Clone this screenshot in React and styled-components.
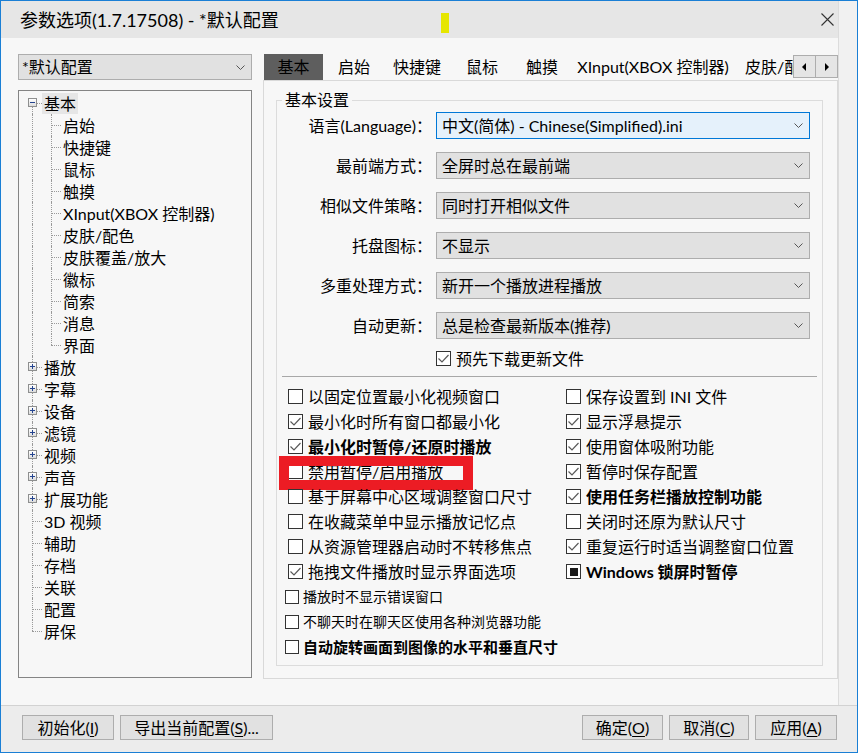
import React from "react";
import styled, { createGlobalStyle } from "styled-components";

const GlobalStyle = createGlobalStyle`
  html, body {
    margin: 0;
    padding: 0;
    background: #ffffff;
  }
  body {
    font-family: "Lato", "Noto Sans CJK SC", sans-serif;
    font-size: 16px;
    color: #000;
  }
  * {
    box-sizing: border-box;
  }
`;

const Window = styled.div`
  width: 858px;
  height: 753px;
  border: 1px solid #1a7fd5;
  display: flex;
  flex-direction: column;
  background: #f7f7f7;
  overflow: hidden;
`;

const Upper = styled.div`
  display: flex;
  height: 704px;
`;

const Main = styled.div`
  width: 837px;
  display: flex;
  flex-direction: column;
`;

const Gutter = styled.div`
  flex: 1;
  background: #f1f1f1;
  border-left: 1px solid #dcdcdc;
`;

const TitleBar = styled.div`
  position: relative;
  height: 37px;
  display: flex;
  align-items: center;
  background: #e6e6e6;
  padding-left: 19px;
`;

const Title = styled.div`
  font-size: 18px;
  line-height: 24px;
  color: #000;
`;

const Marker = styled.span`
  position: absolute;
  left: 440px;
  top: 12px;
  width: 8px;
  height: 20px;
  background: #e6e600;
`;

const CloseButton = styled.div`
  margin-left: auto;
  width: 22px;
  height: 37px;
  display: flex;
  align-items: center;
  justify-content: center;
`;

const Body = styled.div`
  flex: 1;
  display: flex;
  padding: 16px 0 0 17px;
`;

const LeftCol = styled.div`
  width: 234px;
  display: flex;
  flex-direction: column;
  gap: 10px;
`;

const Combo = styled.div`
  display: flex;
  align-items: center;
  height: ${(p) => p.$h || 27}px;
  border: 1px solid ${(p) => (p.$focus ? "#0078d7" : "#adadad")};
  background: ${(p) => (p.$focus ? "#e5f1fb" : "#e1e1e1")};
  padding: 0 6px 0 ${(p) => p.$pad || 5}px;
  white-space: nowrap;
  line-height: 22px;
`;

const ComboText = styled.span`
  flex: 1;
  overflow: hidden;
`;

const Tree = styled.div`
  height: 588px;
  border: 1px solid #848484;
  padding-top: 1px;
  background: #f7f7f7;
`;

const TreeLine = styled.div`
  display: flex;
  height: 22px;
  align-items: center;
`;

const Guide = styled.span`
  position: relative;
  flex: none;
  width: ${(p) => p.$w}px;
  height: 22px;
  &::before {
    content: "";
    position: absolute;
    left: ${(p) => p.$x}px;
    top: ${(p) => (p.$v === "bottom" ? 11 : 0)}px;
    height: ${(p) => (p.$v === "full" ? 22 : 11)}px;
    border-left: 1px dotted #9a9a9a;
  }
  &::after {
    content: "";
    display: ${(p) => (p.$h ? "block" : "none")};
    position: absolute;
    left: ${(p) => p.$x}px;
    right: 0;
    top: 11px;
    border-top: 1px dotted #9a9a9a;
  }
`;

const ExpanderBox = styled.span`
  position: absolute;
  z-index: 1;
  left: 9px;
  top: 6px;
  width: 9px;
  height: 9px;
  border: 1px solid #8e8f8f;
  background: linear-gradient(#ffffff, #dcdcdc);
  display: flex;
`;

const NodeLabel = styled.span`
  padding: 0 2px;
  line-height: 21px;
  background: ${(p) => (p.$selected ? "#e6e6e6" : "transparent")};
  white-space: nowrap;
`;

const RightCol = styled.div`
  margin-left: 11px;
  width: 575px;
  display: flex;
  flex-direction: column;
`;

const TabStrip = styled.div`
  display: flex;
  height: 26px;
  padding-left: 1px;
`;

const TabTrack = styled.div`
  flex: 1;
  display: flex;
  overflow: hidden;
`;

const Tab = styled.div`
  flex: none;
  width: ${(p) => (p.$w ? `${p.$w}px` : "auto")};
  padding-left: ${(p) => p.$pl || 0}px;
  display: flex;
  align-items: center;
  justify-content: ${(p) => (p.$pl ? "flex-start" : "center")};
  background: ${(p) => (p.$active ? "#5e5e5e" : "transparent")};
  white-space: nowrap;
  line-height: 22px;
`;

const ScrollPair = styled.div`
  display: flex;
  margin-top: 1px;
  height: 23px;
`;

const ScrollButton = styled.div`
  width: 23px;
  height: 23px;
  border: 1px solid #adadad;
  background: #e5e5e5;
  display: flex;
  align-items: center;
  justify-content: center;
  & + & {
    margin-left: -1px;
  }
`;

const Panel = styled.div`
  height: 599px;
  border: 1px solid #d9d9d9;
  display: flex;
  flex-direction: column;
  background: #f7f7f7;
`;

const GroupBox = styled.fieldset`
  flex: 1;
  min-width: 0;
  margin: 8px 14px 12px 12px;
  padding: 0;
  border: 1px solid #dcdcdc;
`;

const Legend = styled.legend`
  margin-left: 5px;
  padding: 0 3px;
  line-height: 22px;
`;

const FormGrid = styled.div`
  display: grid;
  grid-template-columns: 155px 374px;
  column-gap: 4px;
  row-gap: 13px;
  padding-top: 1px;
  align-items: center;
`;

const FieldLabel = styled.div`
  text-align: right;
  white-space: nowrap;
  line-height: 22px;
`;

const Separator = styled.div`
  height: 1px;
  margin: 10px 5px 0;
  background: #a8a8a8;
`;

const CheckGrid = styled.div`
  display: grid;
  grid-template-columns: 278px 1fr;
  grid-auto-rows: 25px;
  margin-top: 7px;
  padding-left: 11px;
`;

const LegacyList = styled.div`
  display: flex;
  flex-direction: column;
  padding-left: 8px;
`;

const CheckRow = styled.div`
  position: relative;
  display: flex;
  align-items: center;
  height: ${(p) => (p.$compact ? 15 : 25)}px;
  margin-top: ${(p) => (p.$compact ? -1 : 0)}px;
  white-space: nowrap;
`;

const Box = styled.span`
  flex: none;
  width: ${(p) => (p.$legacy ? 14 : 15)}px;
  height: ${(p) => (p.$legacy ? 14 : 15)}px;
  border: 1px solid #333333;
  background: #ffffff;
  display: flex;
  align-items: center;
  justify-content: center;
`;

const Fill = styled.span`
  width: 8px;
  height: 8px;
  background: #1a1a1a;
`;

const CheckText = styled.span`
  margin-left: ${(p) => (p.$legacy ? 4 : 5)}px;
  font-size: ${(p) => (p.$legacy ? (p.$bold ? 15 : 14) : 16)}px;
  font-weight: ${(p) => (p.$bold ? 700 : 400)};
  line-height: 22px;
`;

const Callout = styled.span`
  position: absolute;
  left: -9px;
  top: -3px;
  width: 194px;
  height: 34px;
  border: 10px solid #ec1c24;
  pointer-events: none;
`;

const Footer = styled.div`
  height: 47px;
  border-top: 1px solid #d2d2d2;
  background: #ececec;
  display: flex;
  align-items: flex-start;
  padding: 9px 20px 0 21px;
`;

const ButtonGroup = styled.div`
  display: flex;
  gap: 6px;
  margin-left: ${(p) => (p.$right ? "auto" : "0")};
`;

const Button = styled.div`
  width: ${(p) => p.$w}px;
  height: 25px;
  border: 1px solid #adadad;
  background: #e1e1e1;
  display: flex;
  align-items: center;
  justify-content: center;
  line-height: 20px;
  white-space: nowrap;
`;

const Underlined = styled.u`
  text-underline-offset: 2px;
`;

const Chevron = () => (
  <svg width="9" height="5" viewBox="0 0 9 5">
    <polyline points="0.5,0.5 4.5,4.5 8.5,0.5" fill="none" stroke="#555" strokeWidth="1" />
  </svg>
);

const Expander = ({ plus }) => (
  <ExpanderBox>
    <svg width="7" height="7" viewBox="0 0 7 7">
      <path d="M1 3.5h5" stroke="#24448f" strokeWidth="1" />
      {plus && <path d="M3.5 1v5" stroke="#24448f" strokeWidth="1" />}
    </svg>
  </ExpanderBox>
);

const subItems = ["启始", "快捷键", "鼠标", "触摸", "XInput(XBOX 控制器)", "皮肤/配色", "皮肤覆盖/放大", "徽标", "简索", "消息", "界面"];
const branches = ["播放", "字幕", "设备", "滤镜", "视频", "声音", "扩展功能"];
const leaves = ["3D 视频", "辅助", "存档", "关联", "配置", "屏保"];

const treeItems = [
  { text: "基本", box: "minus", first: true, selected: true },
  ...subItems.map((text, i) => ({ text, sub: true, lastSub: i === subItems.length - 1 })),
  ...branches.map((text) => ({ text, box: "plus" })),
  ...leaves.map((text, i) => ({ text, last: i === leaves.length - 1 })),
];

const TreeRow = ({ item }) => {
  const v0 = item.first ? "bottom" : item.last ? "top" : "full";
  return (
    <TreeLine>
      <Guide $w={23} $x={13} $v={v0} $h={!item.sub}>
        {item.box && <Expander plus={item.box === "plus"} />}
      </Guide>
      {item.sub && <Guide $w={19} $x={9} $v={item.lastSub ? "top" : "full"} $h />}
      <NodeLabel $selected={item.selected}>{item.text}</NodeLabel>
    </TreeLine>
  );
};

const tabs = [
  { text: "基本", w: 59, active: true },
  { text: "启始", w: 62 },
  { text: "快捷键", w: 64 },
  { text: "鼠标", w: 66 },
  { text: "触摸", w: 54 },
  { text: "XInput(XBOX 控制器)", w: 168 },
  { text: "皮肤/配色", pl: 8 },
];

const fields = [
  { label: "语言(Language)：", value: "中文(简体) - Chinese(Simplified).ini", focus: true },
  { label: "最前端方式：", value: "全屏时总在最前端" },
  { label: "相似文件策略：", value: "同时打开相似文件" },
  { label: "托盘图标：", value: "不显示" },
  { label: "多重处理方式：", value: "新开一个播放进程播放" },
  { label: "自动更新：", value: "总是检查最新版本(推荐)" },
];

const leftChecks = [
  { text: "以固定位置最小化视频窗口" },
  { text: "最小化时所有窗口都最小化", state: "on" },
  { text: "最小化时暂停/还原时播放", state: "on", bold: true },
  { text: "禁用暂停/启用播放", marked: true },
  { text: "基于屏幕中心区域调整窗口尺寸" },
  { text: "在收藏菜单中显示播放记忆点" },
  { text: "从资源管理器启动时不转移焦点" },
  { text: "拖拽文件播放时显示界面选项", state: "on" },
];

const rightChecks = [
  { text: "保存设置到 INI 文件" },
  { text: "显示浮悬提示", state: "on" },
  { text: "使用窗体吸附功能", state: "on" },
  { text: "暂停时保存配置", state: "on" },
  { text: "使用任务栏播放控制功能", state: "on", bold: true },
  { text: "关闭时还原为默认尺寸" },
  { text: "重复运行时适当调整窗口位置", state: "on" },
  { text: "Windows 锁屏时暂停", state: "mixed", bold: true },
];

const legacyChecks = [
  { text: "播放时不显示错误窗口" },
  { text: "不聊天时在聊天区使用各种浏览器功能" },
  { text: "自动旋转画面到图像的水平和垂直尺寸", bold: true },
];

const Check = ({ item, legacy, compact }) => (
  <CheckRow $compact={compact}>
    <Box $legacy={legacy}>
      {item.state === "on" && (
        <svg width="13" height="13" viewBox="0 0 13 13">
          <polyline points="1.5,6.5 5,10 11.5,3" fill="none" stroke="#5a5a5a" strokeWidth="1.2" />
        </svg>
      )}
      {item.state === "mixed" && <Fill />}
    </Box>
    <CheckText $bold={item.bold} $legacy={legacy}>{item.text}</CheckText>
    {item.marked && <Callout />}
  </CheckRow>
);

export default function App() {
  const checkCells = [];
  leftChecks.forEach((item, i) => {
    checkCells.push(<Check key={`l${i}`} item={item} />);
    checkCells.push(<Check key={`r${i}`} item={rightChecks[i]} />);
  });

  return (
    <>
      <GlobalStyle />
      <Window>
        <Upper>
          <Main>
            <TitleBar>
              <Title>参数选项(1.7.17508) - *默认配置</Title>
              <Marker />
              <CloseButton>
                <svg width="13" height="13" viewBox="0 0 13 13">
                  <path d="M0.5 0.5L12.5 12.5M12.5 0.5L0.5 12.5" stroke="#333" strokeWidth="1.1" />
                </svg>
              </CloseButton>
            </TitleBar>
            <Body>
              <LeftCol>
                <Combo $h={26} $pad={3}>
                  <ComboText>*默认配置</ComboText>
                  <Chevron />
                </Combo>
                <Tree>
                  {treeItems.map((item) => (
                    <TreeRow key={item.text} item={item} />
                  ))}
                </Tree>
              </LeftCol>
              <RightCol>
                <TabStrip>
                  <TabTrack>
                    {tabs.map((t) => (
                      <Tab key={t.text} $w={t.w} $pl={t.pl} $active={t.active}>
                        {t.text}
                      </Tab>
                    ))}
                  </TabTrack>
                  <ScrollPair>
                    <ScrollButton>
                      <svg width="5" height="8" viewBox="0 0 5 8">
                        <polygon points="4,0 4,8 0,4" fill="#000" />
                      </svg>
                    </ScrollButton>
                    <ScrollButton>
                      <svg width="5" height="8" viewBox="0 0 5 8">
                        <polygon points="1,0 1,8 5,4" fill="#000" />
                      </svg>
                    </ScrollButton>
                  </ScrollPair>
                </TabStrip>
                <Panel>
                  <GroupBox>
                    <Legend>基本设置</Legend>
                    <FormGrid>
                      {fields.map((f) => (
                        <React.Fragment key={f.label}>
                          <FieldLabel>{f.label}</FieldLabel>
                          <Combo $focus={f.focus}>
                            <ComboText>{f.value}</ComboText>
                            <Chevron />
                          </Combo>
                        </React.Fragment>
                      ))}
                      <span />
                      <Check compact item={{ text: "预先下载更新文件", state: "on" }} />
                    </FormGrid>
                    <Separator />
                    <CheckGrid>{checkCells}</CheckGrid>
                    <LegacyList>
                      {legacyChecks.map((item) => (
                        <Check key={item.text} item={item} legacy />
                      ))}
                    </LegacyList>
                  </GroupBox>
                </Panel>
              </RightCol>
            </Body>
          </Main>
          <Gutter />
        </Upper>
        <Footer>
          <ButtonGroup>
            <Button $w={92}>初始化(<Underlined>I</Underlined>)</Button>
            <Button $w={153}>导出当前配置(<Underlined>S</Underlined>)...</Button>
          </ButtonGroup>
          <ButtonGroup $right>
            <Button $w={81}>确定(<Underlined>O</Underlined>)</Button>
            <Button $w={80}>取消(<Underlined>C</Underlined>)</Button>
            <Button $w={82}>应用(<Underlined>A</Underlined>)</Button>
          </ButtonGroup>
        </Footer>
      </Window>
    </>
  );
}
